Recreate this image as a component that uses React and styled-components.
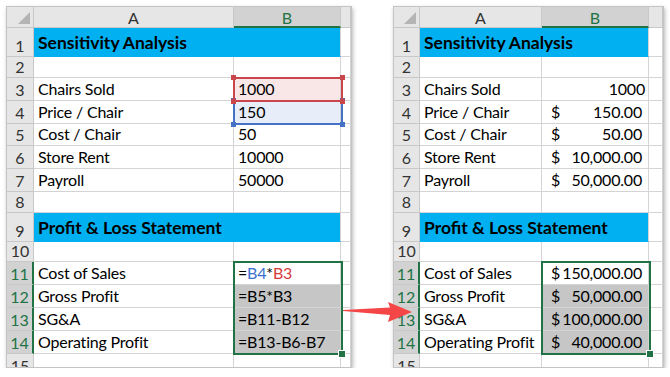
import React from 'react';
import styled, { createGlobalStyle } from 'styled-components';

const GlobalStyle = createGlobalStyle`
  body {
    margin: 0;
    background: #fff;
    font-family: Lato, "Open Sans", sans-serif;
    color: #000;
  }
`;

const GREEN = '#217346';
const ROWS = '21px 29px 21px 23px 23px 22px 23px 23px 21px 29px 20px repeat(5, 23px)';

const Page = styled.div`
  position: relative;
  display: flex;
  align-items: flex-start;
  gap: 41px;
  padding: 6px 0 0 6px;
`;

const Sheet = styled.div`
  display: grid;
  grid-template-columns: ${(p) => p.$cols};
  grid-template-rows: ${ROWS};
  height: 362px;
  box-sizing: border-box;
  border: 1px solid #c4c4c4;
  overflow: hidden;
  background: #fff;
  box-shadow: 1px 2px 4px rgba(0, 0, 0, 0.28);
`;

const Cell = styled.div`
  grid-row: ${(p) => p.$r};
  grid-column: ${(p) => p.$c};
  box-sizing: border-box;
  display: flex;
  align-items: flex-end;
  justify-content: ${(p) => p.$justify || 'flex-start'};
  padding: ${(p) => p.$pad || '0 2px 1px 4px'};
  border-right: 1px solid #d4d4d4;
  border-bottom: 1px solid #d4d4d4;
  background: ${(p) => p.$fill || '#fff'};
  font-size: 16px;
  line-height: 20px;
  letter-spacing: -0.2px;
  white-space: nowrap;
`;

const Title = styled(Cell)`
  background: #00b0f0;
  border-bottom-color: #00b0f0;
  font-weight: 700;
  font-size: 17.5px;
  letter-spacing: 0;
  padding-bottom: 3px;
`;

const Corner = styled.div`
  grid-row: 1;
  grid-column: 1;
  display: flex;
  align-items: flex-end;
  justify-content: flex-end;
  padding: 0 3px 3px 0;
  background: #e6e6e6;
  border-right: 1px solid #c8c8c8;
  border-bottom: 1px solid #c8c8c8;

  span {
    width: 12px;
    height: 12px;
    background: #b4b4b4;
    clip-path: polygon(100% 0, 100% 100%, 0 100%);
  }
`;

const ColHead = styled.div`
  grid-row: 1;
  grid-column: ${(p) => p.$c};
  box-sizing: border-box;
  display: flex;
  align-items: center;
  justify-content: center;
  background: ${(p) => (p.$active ? '#d2d2d2' : '#e6e6e6')};
  border-right: 1px solid #c8c8c8;
  border-bottom: ${(p) => (p.$active ? `2px solid ${GREEN}` : '1px solid #c8c8c8')};
  color: ${(p) => (p.$active ? GREEN : '#333')};
  font-size: 16px;
  padding-top: 1px;
`;

const RowHead = styled.div`
  grid-row: ${(p) => p.$r};
  grid-column: 1;
  box-sizing: border-box;
  display: flex;
  align-items: flex-end;
  justify-content: center;
  padding-bottom: 1px;
  background: ${(p) => (p.$active ? '#d2d2d2' : '#e6e6e6')};
  border-right: ${(p) => (p.$active ? `2px solid ${GREEN}` : '1px solid #c8c8c8')};
  border-bottom: 1px solid #c8c8c8;
  color: ${(p) => (p.$active ? GREEN : '#333')};
  font-size: 16px;
  line-height: 19px;
`;

const Range = styled.div`
  grid-row: ${(p) => p.$r};
  grid-column: 3;
  position: relative;
  margin: -1px -2px -1px -1px;
  border: 2px solid ${(p) => p.$color};
  pointer-events: none;
  z-index: 2;
`;

const Handle = styled.i`
  position: absolute;
  width: 5px;
  height: 5px;
  background: ${(p) => p.$color};
  ${(p) => (p.$top ? 'top: -4px;' : 'bottom: -4px;')}
  ${(p) => (p.$left ? 'left: -4px;' : 'right: -4px;')}
`;

const FillHandle = styled.i`
  position: absolute;
  right: -5px;
  bottom: -5px;
  width: 6px;
  height: 6px;
  background: ${GREEN};
  border: 1px solid #fff;
`;

const Ref = styled.span`
  color: ${(p) => p.$color};
`;

const Amount = styled.span`
  display: flex;
  justify-content: space-between;
  width: 100%;
`;

const Arrow = styled.svg`
  position: absolute;
  left: 340px;
  top: 298px;
  z-index: 5;
`;

const leftRows = [
  { title: 'Sensitivity Analysis' },
  {},
  { a: 'Chairs Sold', b: '1000', fill: '#f9e6e6' },
  { a: 'Price / Chair', b: '150', fill: '#e8eef9' },
  { a: 'Cost / Chair', b: '50' },
  { a: 'Store Rent', b: '10000' },
  { a: 'Payroll', b: '50000' },
  {},
  { title: 'Profit & Loss Statement' },
  {},
  {
    a: 'Cost of Sales',
    b: (
      <span>
        =<Ref $color="#3a6fd0">B4</Ref>*<Ref $color="#d63c3c">B3</Ref>
      </span>
    ),
    sel: true,
  },
  { a: 'Gross Profit', b: '=B5*B3', sel: true, shade: true },
  { a: 'SG&A', b: '=B11-B12', sel: true, shade: true },
  { a: 'Operating Profit', b: '=B13-B6-B7', sel: true, shade: true },
  {},
];

const rightRows = [
  { title: 'Sensitivity Analysis' },
  {},
  { a: 'Chairs Sold', plain: '1000' },
  { a: 'Price / Chair', amt: '150.00' },
  { a: 'Cost / Chair', amt: '50.00' },
  { a: 'Store Rent', amt: '10,000.00' },
  { a: 'Payroll', amt: '50,000.00' },
  {},
  { title: 'Profit & Loss Statement' },
  {},
  { a: 'Cost of Sales', amt: '150,000.00', sel: true },
  { a: 'Gross Profit', amt: '50,000.00', sel: true, shade: true },
  { a: 'SG&A', amt: '100,000.00', sel: true, shade: true },
  { a: 'Operating Profit', amt: '40,000.00', sel: true, shade: true },
  {},
];

function valueCell(row, r) {
  const fill = row.shade ? '#c6c6c6' : row.fill;
  if (row.amt) {
    return (
      <Cell $r={r} $c={3} $fill={fill} $pad="0 6px 1px 9px">
        <Amount>
          <span>$</span>
          <span>{row.amt}</span>
        </Amount>
      </Cell>
    );
  }
  if (row.plain) {
    return (
      <Cell $r={r} $c={3} $justify="flex-end" $pad="0 3px 1px 4px">
        {row.plain}
      </Cell>
    );
  }
  return (
    <Cell $r={r} $c={3} $fill={fill}>
      {row.b}
    </Cell>
  );
}

function Worksheet({ cols, rows, refs }) {
  return (
    <Sheet $cols={cols}>
      <Corner>
        <span />
      </Corner>
      <ColHead $c={2}>A</ColHead>
      <ColHead $c={3} $active>
        B
      </ColHead>
      <ColHead $c={4} />
      {rows.map((row, i) => {
        const r = i + 2;
        return (
          <React.Fragment key={r}>
            <RowHead $r={r} $active={row.sel}>
              {i + 1}
            </RowHead>
            {row.title ? (
              <Title $r={r} $c="2 / 4">
                {row.title}
              </Title>
            ) : (
              <>
                <Cell $r={r} $c={2}>
                  {row.a}
                </Cell>
                {valueCell(row, r)}
              </>
            )}
            <Cell $r={r} $c={4} />
          </React.Fragment>
        );
      })}
      {refs &&
        refs.map((ref) => (
          <Range key={ref.r} $r={ref.r} $color={ref.color}>
            <Handle $color={ref.color} $top $left />
            <Handle $color={ref.color} $top />
            <Handle $color={ref.color} $left />
            <Handle $color={ref.color} />
          </Range>
        ))}
      <Range $r="12 / 16" $color={GREEN}>
        <FillHandle />
      </Range>
    </Sheet>
  );
}

export default function App() {
  return (
    <>
      <GlobalStyle />
      <Page>
        <Worksheet
          cols="27px 200px 107px 10px"
          rows={leftRows}
          refs={[
            { r: 5, color: '#4472c4' },
            { r: 4, color: '#c9474a' },
          ]}
        />
        <Worksheet cols="26px 122px 107px 14px" rows={rightRows} />
        <Arrow width="76" height="28" viewBox="0 0 76 28">
          <polygon
            points="3,12 50,9.5 48,4 72,14 48,24 50,17 3,13"
            fill="#f44646"
          />
        </Arrow>
      </Page>
    </>
  );
}
